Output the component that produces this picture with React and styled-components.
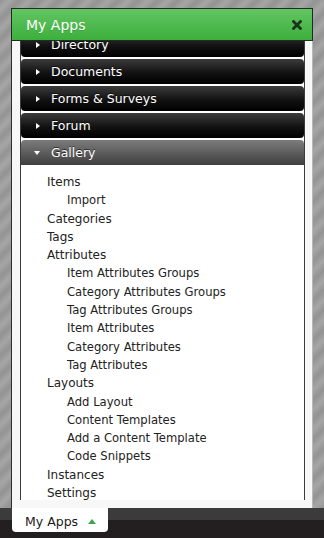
import React from 'react';
import styled, { createGlobalStyle } from 'styled-components';

const GlobalStyle = createGlobalStyle`
  html, body {
    margin: 0;
    padding: 0;
  }
  body {
    width: 324px;
    height: 538px;
    overflow: hidden;
    font-family: "DejaVu Sans", Verdana, sans-serif;
    background-color: #9c9c9c;
    background-image: repeating-linear-gradient(
      135deg,
      #939393 0px,
      #a6a6a6 7px,
      #939393 14px
    );
  }
`;

const Page = styled.div`
  display: flex;
  flex-direction: column;
  height: 538px;
  padding-top: 8px;
  box-sizing: border-box;
`;

const Panel = styled.div`
  margin-left: 11px;
  width: 302px;
  height: 500px;
  display: flex;
  flex-direction: column;
  box-sizing: border-box;
`;

const Header = styled.div`
  height: 33px;
  box-sizing: border-box;
  border: 1px solid #1e2e1e;
  background: linear-gradient(#63c563, #3caf3c);
  display: flex;
  align-items: center;
  justify-content: space-between;
  padding: 0 10px 0 14px;
  color: #fff;
  font-size: 14px;
  text-shadow: 0 1px 0 rgba(0, 0, 0, 0.15);
`;

const Close = styled.svg`
  width: 10px;
  height: 10px;
  display: block;
`;

const Body = styled.div`
  flex: 1;
  min-height: 0;
  background: #f7f7f7;
  border-left: 1px solid #2e2e2e;
  border-right: 1px solid #b8b8b8;
  padding: 0 7px 8px 8px;
  display: flex;
  flex-direction: column;
`;

const Scroller = styled.div`
  flex: 1;
  min-height: 0;
  overflow: hidden;
  background: #fff;
  border-left: 1px solid #3c3c3c;
  border-right: 1px solid #3c3c3c;
`;

/* list is scrolled down a little, so the first row is cut off */
const List = styled.div`
  margin-top: -9px;
  display: flex;
  flex-direction: column;
  gap: 2px;
`;

const Section = styled.div`
  display: flex;
  flex-direction: column;
`;

const SectionHead = styled.div`
  height: 25px;
  display: flex;
  align-items: center;
  gap: 11px;
  padding-left: 15px;
  color: #fff;
  font-size: 12.5px;
  text-shadow: 0 -1px 0 rgba(0, 0, 0, 0.6);
  border-radius: ${(p) => (p.$open ? '4px 4px 0 0' : '4px')};
  background: ${(p) =>
    p.$open
      ? 'linear-gradient(#7c7c7c, #3f3f3f)'
      : 'linear-gradient(#3c3c3c, #121212 55%, #000)'};
`;

const Arrow = styled.span`
  width: 0;
  height: 0;
  border-style: solid;
  ${(p) =>
    p.$open
      ? 'border-width: 4px 3.5px 0 3.5px; border-color: #fff transparent transparent transparent; margin-left: -2px;'
      : 'border-width: 3.5px 0 3.5px 4px; border-color: transparent transparent transparent #fff;'}
`;

const SectionBody = styled.div`
  padding: 8px 0 0 26px;
  display: flex;
  flex-direction: column;
`;

const Link = styled.div`
  line-height: 18.3px;
  color: #222;
  font-size: ${(p) => (p.$sub ? '11.6px' : '12px')};
  padding-left: ${(p) => (p.$sub ? '20px' : '0')};
  white-space: nowrap;
`;

const Footer = styled.div`
  height: 30px;
  background: linear-gradient(#3b3b3b 0 12px, #231f20 12px);
  display: flex;
  align-items: flex-start;
`;

const Tab = styled.div`
  margin-left: 12px;
  width: 96px;
  height: 24px;
  box-sizing: border-box;
  background: #fff;
  border-radius: 0 0 4px 4px;
  display: flex;
  align-items: center;
  padding: 2px 0 0 13px;
  gap: 10px;
  color: #1a1a1a;
  font-size: 12.5px;
`;

const UpArrow = styled.span`
  width: 0;
  height: 0;
  border-style: solid;
  border-width: 0 4px 5px 4px;
  border-color: transparent transparent #3aa84a transparent;
`;

const closed = ['Directory', 'Documents', 'Forms & Surveys', 'Forum'];

const galleryLinks = [
  ['Items'],
  ['Import', true],
  ['Categories'],
  ['Tags'],
  ['Attributes'],
  ['Item Attributes Groups', true],
  ['Category Attributes Groups', true],
  ['Tag Attributes Groups', true],
  ['Item Attributes', true],
  ['Category Attributes', true],
  ['Tag Attributes', true],
  ['Layouts'],
  ['Add Layout', true],
  ['Content Templates', true],
  ['Add a Content Template', true],
  ['Code Snippets', true],
  ['Instances'],
  ['Settings'],
];

const App = () => {
  return (
    <>
      <GlobalStyle />
      <Page>
        <Panel>
          <Header>
            <span>My Apps</span>
            <Close viewBox="0 0 10 10">
              <path
                d="M1.5 1.5 L8.5 8.5 M8.5 1.5 L1.5 8.5"
                stroke="#1c331c"
                strokeWidth="2.8"
                strokeLinecap="square"
              />
            </Close>
          </Header>
          <Body>
            <Scroller>
              <List>
                {closed.map((name) => (
                  <Section key={name}>
                    <SectionHead>
                      <Arrow />
                      {name}
                    </SectionHead>
                  </Section>
                ))}
                <Section>
                  <SectionHead $open>
                    <Arrow $open />
                    Gallery
                  </SectionHead>
                  <SectionBody>
                    {galleryLinks.map(([label, sub]) => (
                      <Link key={label} $sub={sub}>
                        {label}
                      </Link>
                    ))}
                  </SectionBody>
                </Section>
              </List>
            </Scroller>
          </Body>
        </Panel>
        <Footer>
          <Tab>
            My Apps
            <UpArrow />
          </Tab>
        </Footer>
      </Page>
    </>
  );
};

export default App;
